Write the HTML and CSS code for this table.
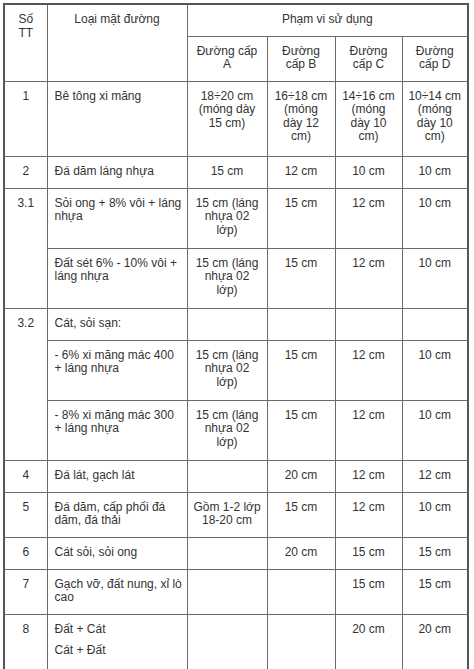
FILE: index.html
```html
<!DOCTYPE html>
<html lang="vi">
<head>
<meta charset="utf-8">
<title>Phạm vi sử dụng mặt đường</title>
<link rel="stylesheet" href="styles.css">
</head>
<body>
<table class="grid">
  <colgroup>
    <col class="c-no">
    <col class="c-type">
    <col class="c-a">
    <col class="c-b">
    <col class="c-c">
    <col class="c-d">
  </colgroup>
  <thead>
    <tr class="h1">
      <th rowspan="2" class="num">Số<br>TT</th>
      <th rowspan="2" class="mid">Loại mặt đường</th>
      <th colspan="4">Phạm vi sử dụng</th>
    </tr>
    <tr class="h2">
      <th>Đường cấp<br>A</th>
      <th>Đường<br>cấp B</th>
      <th>Đường<br>cấp C</th>
      <th>Đường<br>cấp D</th>
    </tr>
  </thead>
  <tbody>
    <tr class="r4">
      <td class="num">1</td>
      <td class="name">Bê tông xi măng</td>
      <td>18÷20 cm<br>(móng dày<br>15 cm)</td>
      <td>16÷18 cm<br>(móng<br>dày 12<br>cm)</td>
      <td>14÷16 cm<br>(móng<br>dày 10<br>cm)</td>
      <td>10÷14 cm<br>(móng<br>dày 10<br>cm)</td>
    </tr>
    <tr class="r1">
      <td class="num">2</td>
      <td class="name">Đá dăm láng nhựa</td>
      <td>15 cm</td>
      <td>12 cm</td>
      <td>10 cm</td>
      <td>10 cm</td>
    </tr>
    <tr class="r3">
      <td class="num" rowspan="2">3.1</td>
      <td class="name">Sỏi ong + 8% vôi + láng<br>nhựa</td>
      <td>15 cm (láng<br>nhựa 02<br>lớp)</td>
      <td>15 cm</td>
      <td>12 cm</td>
      <td>10 cm</td>
    </tr>
    <tr class="r3">
      <td class="name">Đất sét 6% - 10% vôi +<br>láng nhựa</td>
      <td>15 cm (láng<br>nhựa 02<br>lớp)</td>
      <td>15 cm</td>
      <td>12 cm</td>
      <td>10 cm</td>
    </tr>
    <tr class="r1">
      <td class="num" rowspan="3">3.2</td>
      <td class="name">Cát, sỏi sạn:</td>
      <td></td>
      <td></td>
      <td></td>
      <td></td>
    </tr>
    <tr class="r3">
      <td class="name">- 6% xi măng mác 400<br>+ láng nhựa</td>
      <td>15 cm (láng<br>nhựa 02<br>lớp)</td>
      <td>15 cm</td>
      <td>12 cm</td>
      <td>10 cm</td>
    </tr>
    <tr class="r3">
      <td class="name">- 8% xi măng mác 300<br>+ láng nhựa</td>
      <td>15 cm (láng<br>nhựa 02<br>lớp)</td>
      <td>15 cm</td>
      <td>12 cm</td>
      <td>10 cm</td>
    </tr>
    <tr class="r1">
      <td class="num">4</td>
      <td class="name">Đá lát, gạch lát</td>
      <td></td>
      <td>20 cm</td>
      <td>12 cm</td>
      <td>12 cm</td>
    </tr>
    <tr class="r2">
      <td class="num">5</td>
      <td class="name">Đá dăm, cấp phối đá<br>dăm, đá thải</td>
      <td>Gồm 1-2 lớp<br>18-20 cm</td>
      <td>15 cm</td>
      <td>12 cm</td>
      <td>10 cm</td>
    </tr>
    <tr class="r1">
      <td class="num">6</td>
      <td class="name">Cát sỏi, sỏi ong</td>
      <td></td>
      <td>20 cm</td>
      <td>15 cm</td>
      <td>15 cm</td>
    </tr>
    <tr class="r2">
      <td class="num">7</td>
      <td class="name">Gạch vỡ, đất nung, xỉ lò<br>cao</td>
      <td></td>
      <td></td>
      <td>15 cm</td>
      <td>15 cm</td>
    </tr>
    <tr class="r8">
      <td class="num">8</td>
      <td class="name"><p class="para">Đất + Cát</p><p class="para">Cát + Đất</p></td>
      <td></td>
      <td></td>
      <td>20 cm</td>
      <td>20 cm</td>
    </tr>
  </tbody>
</table>
</body>
</html>
```

FILE: styles.css
```css
html, body {
  margin: 0;
  padding: 0;
  background: #ffffff;
}

body {
  padding: 3px 0 0 3px;
  font-family: "Liberation Sans", Arial, sans-serif;
  font-size: 12px;
  color: #333333;
}

.grid {
  border-collapse: collapse;
  table-layout: fixed;
  width: 465px;
  border: 2px solid #555555;
}

.c-no { width: 43px; }
.c-type { width: 140px; }
.c-a { width: 80px; }
.c-b { width: 68px; }
.c-c { width: 67px; }
.c-d { width: 66px; }

.grid th,
.grid td {
  border: 1px solid #6a6a6a;
  padding: 8px 1px 8px 1px;
  line-height: 13.5px;
  vertical-align: top;
  text-align: center;
  font-weight: normal;
  white-space: nowrap;
}

.grid td.name {
  text-align: left;
  padding-left: 7px;
  padding-right: 2px;
}

.h1 { height: 32px; }
.h2 { height: 45px; }
.r1 { height: 32px; }
.r2 { height: 45px; }
.r3 { height: 60px; }
.r4 { height: 75px; }
.r8 { height: 70px; }

.para {
  margin: 0 0 8px 0;
}
```
